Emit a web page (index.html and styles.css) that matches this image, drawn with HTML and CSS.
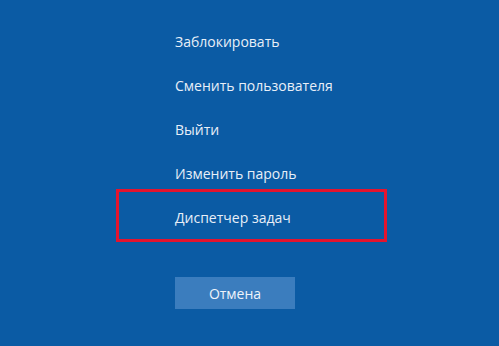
FILE: index.html
```html
<!DOCTYPE html>
<html lang="ru">
<head>
    <meta charset="UTF-8">
    <meta name="viewport" content="width=device-width, initial-scale=1.0">
    <title>Параметры безопасности</title>
    <link rel="stylesheet" href="styles.css">
</head>
<body>
    <div class="screen">
        <ul class="menu">
            <li class="item">Заблокировать</li>
            <li class="item">Сменить пользователя</li>
            <li class="item">Выйти</li>
            <li class="item">Изменить пароль</li>
            <li class="item highlight">Диспетчер задач</li>
        </ul>
        <button class="cancel">Отмена</button>
    </div>
</body>
</html>
```

FILE: styles.css
```css
html, body {
    margin: 0;
    padding: 0;
    height: 100%;
}

body {
    background-color: #0b5ba4;
    font-family: "Open Sans", "Noto Sans", sans-serif;
    color: #e8eff8;
}

.screen {
    padding: 20px 0 0 175px;
}

.menu {
    list-style: none;
    margin: 0;
    padding: 0;
}

.item {
    height: 44px;
    line-height: 44px;
    font-size: 14px;
}

.highlight {
    box-sizing: border-box;
    width: 271px;
    height: 53px;
    margin: -7px 0 -2px -59px;
    padding: 4px 0 0 56px;
    border: 3px solid #e4142e;
    line-height: 44px;
}

.cancel {
    display: block;
    margin-top: 37px;
    width: 120px;
    height: 32px;
    border: none;
    background-color: #3b7dbe;
    color: #eef4fb;
    font-family: "Open Sans", "Noto Sans", sans-serif;
    font-size: 14px;
    padding: 0;
}
```
